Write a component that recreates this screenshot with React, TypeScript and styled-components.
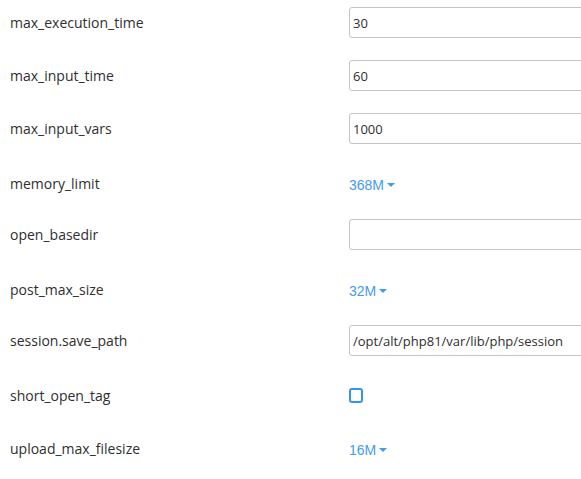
import React from 'react';
import styled, { createGlobalStyle } from 'styled-components';

const GlobalStyle = createGlobalStyle`
    html, body {
        margin: 0;
        padding: 0;
        background: #ffffff;
        overflow: hidden;
    }
    body {
        font-family: 'Open Sans', 'Noto Sans', sans-serif;
        color: #333333;
    }
`;

type Setting =
    | { name: string; kind: 'text'; value: string }
    | { name: string; kind: 'select'; value: string }
    | { name: string; kind: 'check'; value: boolean };

const settings: Setting[] = [
    { name: 'max_execution_time', kind: 'text', value: '30' },
    { name: 'max_input_time', kind: 'text', value: '60' },
    { name: 'max_input_vars', kind: 'text', value: '1000' },
    { name: 'memory_limit', kind: 'select', value: '368M' },
    { name: 'open_basedir', kind: 'text', value: '' },
    { name: 'post_max_size', kind: 'select', value: '32M' },
    { name: 'session.save_path', kind: 'text', value: '/opt/alt/php81/var/lib/php/session' },
    { name: 'short_open_tag', kind: 'check', value: false },
    { name: 'upload_max_filesize', kind: 'select', value: '16M' },
];

const Viewport = styled.div`
    width: 100%;
    overflow: hidden;
`;

const List = styled.div`
    width: 620px;
    margin-top: -4px;
    display: flex;
    flex-direction: column;
`;

const Row = styled.div<{ $low: boolean }>`
    height: 53px;
    box-sizing: border-box;
    padding-top: ${({ $low }) => ($low ? '4px' : '0')};
    display: grid;
    grid-template-columns: 349px 1fr;
    align-items: center;
`;

const Label = styled.div`
    padding-left: 10px;
    font-size: 14px;
    color: #2f2f2f;
`;

const TextInput = styled.input`
    box-sizing: border-box;
    width: 100%;
    height: 31px;
    padding: 0 3px;
    border: 1px solid #c4c4c4;
    border-radius: 3px;
    font-family: 'Open Sans', 'Noto Sans', sans-serif;
    font-size: 13px;
    color: #2f2f2f;
    background: #ffffff;
    outline: none;
`;

const SelectLink = styled.span`
    display: inline-flex;
    align-items: center;
    gap: 3px;
    font-family: 'Liberation Sans', Arial, sans-serif;
    font-size: 14px;
    color: #3f9cf2;
    cursor: pointer;
`;

const Caret = styled.span`
    width: 0;
    height: 0;
    border-left: 4px solid transparent;
    border-right: 4px solid transparent;
    border-top: 4px solid #3f9cf2;
    margin-top: 1px;
`;

const CheckBox = styled.span`
    display: block;
    box-sizing: border-box;
    width: 14px;
    height: 15px;
    border: 2px solid #3495ee;
    border-radius: 3px;
    background: #ffffff;
`;

const Field = ({ setting }: { setting: Setting }) => {
    if (setting.kind === 'text') {
        return <TextInput defaultValue={setting.value} />;
    }
    if (setting.kind === 'select') {
        return (
            <div>
                <SelectLink>
                    {setting.value}
                    <Caret />
                </SelectLink>
            </div>
        );
    }
    return <CheckBox />;
};

const App = () => (
    <>
        <GlobalStyle />
        <Viewport>
            <List>
                {settings.map((s) => (
                    <Row key={s.name} $low={s.kind !== 'text'}>
                        <Label>{s.name}</Label>
                        <Field setting={s} />
                    </Row>
                ))}
            </List>
        </Viewport>
    </>
);

export default App;
